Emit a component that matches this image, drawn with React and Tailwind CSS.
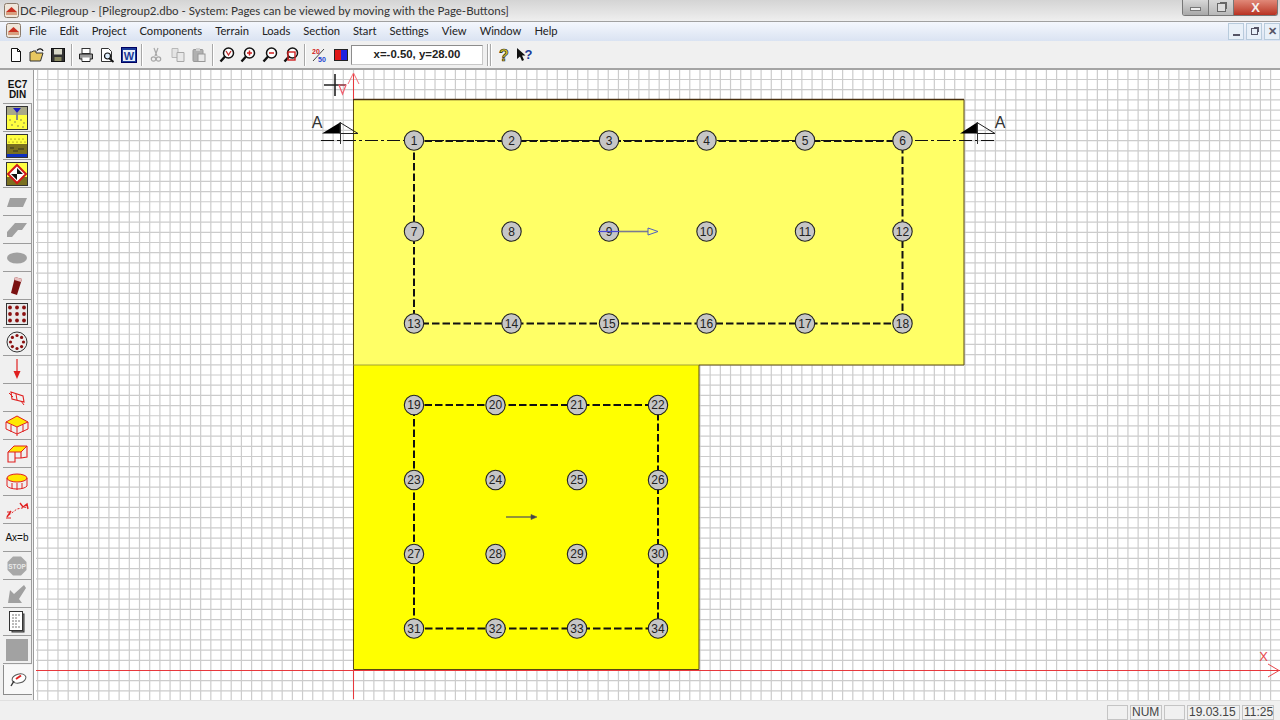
import React from "react";

const LIB = "font-['Liberation_Sans',Arial,sans-serif]";
const UI = "font-['Lato','Noto_Sans',sans-serif]";

const pilesTop = [];
[140.5, 231.5, 323.5].forEach((y) => {
  [414, 511.5, 609, 706.5, 805, 902.5].forEach((x) => pilesTop.push([x, y]));
});
const pilesBottom = [];
[405, 480, 554, 628.5].forEach((y) => {
  [414, 495.5, 577, 658].forEach((x) => pilesBottom.push([x, y]));
});
const piles = [...pilesTop, ...pilesBottom];

const STEP = 10.19;
const vLines = [];
for (let x = 353.5 - 31 * STEP; x < 1282; x += STEP) vLines.push(x);
const hLines = [];
for (let y = 670.5 + 2 * STEP; y > 68; y -= STEP) hLines.push(y);

function Canvas() {
  return (
    <svg viewBox="36 70 1244 630" className="block w-full h-full bg-white">
      {vLines.map((x, i) => (
        <line key={"v" + i} x1={x} x2={x} y1="70" y2="700" stroke="#cccccc" strokeWidth="1.2" />
      ))}
      {hLines.map((y, i) => (
        <line key={"h" + i} x1="36" x2="1280" y1={y} y2={y} stroke="#cccccc" strokeWidth="1.2" />
      ))}

      <rect x="353" y="99" width="611" height="266" fill="#ffff66" />
      <rect x="353" y="365" width="346" height="304.5" fill="#ffff00" />
      <path d="M353.5 99.5H964V365H699V669.5H353.5Z" fill="none" stroke="#5a4a10" strokeWidth="1" />
      <line x1="353" x2="964" y1="99.5" y2="99.5" stroke="#4a3010" strokeWidth="1.6" />
      <line x1="353" x2="699" y1="365" y2="365" stroke="#8a8a30" strokeWidth="0.8" />

      <line x1="36" x2="1280" y1="670.5" y2="670.5" stroke="#e8383c" strokeWidth="1" />
      <line x1="353.5" x2="353.5" y1="73" y2="99" stroke="#e8383c" strokeWidth="1" />
      <line x1="353.5" x2="353.5" y1="671" y2="699" stroke="#e8383c" strokeWidth="1" />
      <path d="M348 84L353.5 73L359 84" fill="none" stroke="#f07078" strokeWidth="1" />
      <path d="M1268 664L1279 670.5L1268 677" fill="none" stroke="#e8484c" strokeWidth="1" />
      <text x="1263.5" y="661" textAnchor="middle" fontSize="13" fill="#e8484c" className={LIB}>X</text>

      <path d="M324 85H346M335 74V96" stroke="#222" strokeWidth="1.6" />
      <path d="M339 85L346 85L342.5 94Z" fill="none" stroke="#f06070" strokeWidth="1.2" />

      {/* section line */}
      <line x1="321" x2="995" y1="140.5" y2="140.5" stroke="#111" strokeWidth="1.2" strokeDasharray="13 3 3 3" />
      <path d="M322 133.5L340 122.5V133.5Z" fill="#000" />
      <path d="M340 122.5L358 133.5H340Z" fill="none" stroke="#222" strokeWidth="1" />
      <line x1="340.5" x2="340.5" y1="122" y2="144" stroke="#333" strokeWidth="1" />
      <text x="317" y="128" textAnchor="middle" fontSize="16" fill="#333" className={LIB}>A</text>
      <path d="M960 133.5L977 122.5V133.5Z" fill="#000" />
      <path d="M977 122.5L995 133.5H977Z" fill="none" stroke="#222" strokeWidth="1" />
      <line x1="977.5" x2="977.5" y1="122" y2="144" stroke="#333" strokeWidth="1" />
      <text x="1000" y="128" textAnchor="middle" fontSize="16" fill="#333" className={LIB}>A</text>

      {/* dashed pile caps */}
      <rect x="414" y="141" width="488.5" height="182.5" fill="none" stroke="#111" strokeWidth="2" strokeDasharray="7.5 3" />
      <rect x="414" y="405" width="244" height="223.5" fill="none" stroke="#111" strokeWidth="2" strokeDasharray="7.5 3" />

      {piles.map(([x, y], i) => (
        <g key={i}>
          <circle cx={x} cy={y} r="9.7" fill="#c6c6c6" stroke="#222" strokeWidth="1.1" />
          <text x={x} y={y + 4.3} textAnchor="middle" fontSize="12" fill="#222" className={LIB}>{i + 1}</text>
        </g>
      ))}

      <line x1="619" x2="650" y1="231.5" y2="231.5" stroke="#7a7a90" strokeWidth="1.6" />
      <line x1="598" x2="619" y1="231.5" y2="231.5" stroke="#4848d8" strokeWidth="1.2" />
      <path d="M648 228L658 231.5L648 235Z" fill="#ffff66" stroke="#5060c0" strokeWidth="1" />
      <line x1="506" x2="532" y1="517" y2="517" stroke="#666650" strokeWidth="1.4" />
      <path d="M531 514.5L537 517L531 519.5Z" fill="#444" stroke="#555" strokeWidth="0.6" />
    </svg>
  );
}

const S = ({ children, w = 16, h = 16, vb = "0 0 16 16" }) => (
  <svg width={w} height={h} viewBox={vb} className="block">{children}</svg>
);

const Sep = ({ className = "mx-[2px]" }) => (
  <div className={`w-[2px] h-[22px] shrink-0 border-l border-[#a8a8a8] border-r border-r-white ${className}`} />
);

function Mag({ c = "#c00", sym }) {
  return (
    <S>
      <circle cx="9.5" cy="6" r="5" fill="#fff" stroke="#111" strokeWidth="1.5" />
      <path d="M6 9.5L1.5 14.5" stroke="#111" strokeWidth="2.4" />
      {sym === "fit" && <path d="M7 4L9.5 8L12 4" fill="none" stroke={c} strokeWidth="1.3" />}
      {sym === "plus" && <path d="M7 6H12M9.5 3.5V8.5" stroke={c} strokeWidth="1.5" />}
      {sym === "minus" && <path d="M7 6H12" stroke={c} strokeWidth="1.5" />}
      {sym === "win" && <rect x="5" y="5" width="7" height="8" fill="none" stroke={c} strokeWidth="1.4" />}
    </S>
  );
}

const Btn = ({ children, w = "w-[21px]" }) => (
  <div className={`${w} h-[22px] flex items-center justify-center shrink-0`}>{children}</div>
);

function TopToolbar() {
  return (
    <div className="h-[27px] bg-[#f0f0f0] flex items-center pl-[5px] shrink-0">
      <Btn><S><path d="M3.5 1.5H9.5L12.5 4.5V14.5H3.5Z" fill="#fff" stroke="#111" /><path d="M9.5 1.5V4.5H12.5" fill="none" stroke="#111" /></S></Btn>
      <Btn><S><path d="M1 14V5H3L4 4H7V6H14L11.5 14Z" fill="#e8c860" stroke="#333" strokeWidth="1" /><path d="M8 3.5C10 1 13 1.5 14 4" fill="none" stroke="#111" strokeWidth="1.3" /></S></Btn>
      <Btn w="w-[22px]"><S><rect x="1.5" y="1.5" width="13" height="13" fill="#333" stroke="#111" /><rect x="4" y="2" width="8" height="5.5" fill="#d8d8c8" /><rect x="4.5" y="10" width="7" height="4" fill="#888860" /></S></Btn>
      <Sep />
      <Btn><S><rect x="4" y="1.5" width="8" height="5" fill="#fff" stroke="#333" /><path d="M1.5 7H14.5V12H12V14.5H4V12H1.5Z" fill="#999" stroke="#222" /><rect x="4.5" y="10.5" width="7" height="3.5" fill="#fff" /></S></Btn>
      <Btn w="w-[22px]"><S><path d="M2.5 1.5H9.5L12.5 4.5V14.5H2.5Z" fill="#fff" stroke="#333" /><circle cx="8.5" cy="9" r="3" fill="#e0f0ff" stroke="#111" strokeWidth="1.2" /><path d="M10.5 11.5L14.5 15" stroke="#111" strokeWidth="1.8" /></S></Btn>
      <Btn><S><rect x="0.5" y="0.5" width="15" height="15" fill="#1a3a9a" stroke="#000060" /><rect x="2" y="3" width="12" height="11" fill="#e8eef8" /><text x="8" y="13" textAnchor="middle" fontSize="11" fontWeight="bold" fill="#1a3a9a" className={LIB}>W</text></S></Btn>
      <Sep />
      <Btn w="w-[22px]"><S><path d="M6 1L9 9M10 1L7 9" stroke="#a8a8a8" strokeWidth="1.2" /><circle cx="5.5" cy="12" r="2.2" fill="none" stroke="#a8a8a8" strokeWidth="1.2" /><circle cx="10.5" cy="12" r="2.2" fill="none" stroke="#a8a8a8" strokeWidth="1.2" /></S></Btn>
      <Btn><S><path d="M2 1.5H8V10.5H2Z" fill="#e4e4e4" stroke="#b8b8b8" /><path d="M7 5.5H14V14.5H7Z" fill="#e8e8e8" stroke="#a8a8a8" /></S></Btn>
      <Btn w="w-[22px]"><S><rect x="2" y="2.5" width="10" height="12" rx="1" fill="#b0b0b0" stroke="#989898" /><rect x="5" y="1" width="4" height="3" fill="#d0d0d0" /><rect x="7" y="7" width="7" height="7.5" fill="#e8e8e8" stroke="#989898" /></S></Btn>
      <Sep />
      <Btn><Mag c="#c03030" sym="fit" /></Btn>
      <Btn w="w-[22px]"><Mag c="#d02020" sym="plus" /></Btn>
      <Btn><Mag c="#d02020" sym="minus" /></Btn>
      <Btn><Mag c="#d02020" sym="win" /></Btn>
      <Sep className="ml-[3px] mr-[2px]" />
      <Btn w="w-[22px]">
        <S>
          <text x="1" y="6.5" fontSize="7" fontWeight="bold" fill="#d02020" className={LIB}>20</text>
          <path d="M2 14L13 2" stroke="#444" strokeWidth="1" />
          <text x="7" y="15" fontSize="7" fontWeight="bold" fill="#2040d0" className={LIB}>50</text>
        </S>
      </Btn>
      <Btn>
        <S><rect x="1.5" y="2.5" width="13" height="11" fill="#2020e0" stroke="#222" /><rect x="2" y="3" width="6" height="10" fill="#e01818" /></S>
      </Btn>
      <div className={`w-[132px] h-[20px] shrink-0 border border-[#8c8c8c] border-r-[#c8c8c8] border-b-[#c8c8c8] bg-white flex items-center justify-center text-[11.4px] font-bold text-[#222] ${LIB}`}>
        x=-0.50, y=28.00
      </div>
      <Sep className="ml-[4px] mr-[1px]" />
      <Sep className="mr-[1px]" />
      <Btn>
        <S><text x="8" y="13.5" textAnchor="middle" fontSize="16" fontWeight="bold" fill="#e0d020" stroke="#222" strokeWidth="0.7" className={LIB}>?</text></S>
      </Btn>
      <Btn>
        <S w={18} vb="0 0 18 16"><path d="M1 1V12L4 9.5L6 14L8 13L6 8.5H9.5Z" fill="#111" /><text x="12.5" y="12" textAnchor="middle" fontSize="13" fontWeight="bold" fill="#1a3a9a" className={LIB}>?</text></S>
      </Btn>
    </div>
  );
}

const soilDots = (
  <path d="M3 8h.01M7 8h.01M11 8h.01M15 8h.01M19 8h.01M5 5h.01M9 5h.01M13 5h.01M17 5h.01" stroke="#665500" strokeWidth="1.2" strokeLinecap="round" />
);

const LeftIcons = [
  <S w={22} h={24} vb="0 0 22 24">
    <rect x="0.5" y="0.5" width="21" height="23" fill="#ffff40" stroke="#333" />
    <rect x="1" y="1" width="20" height="8" fill="#a8a888" />
    <path d="M7 2H15L11 7Z" fill="#2020c0" />
    <path d="M11 7V14" stroke="#888" strokeWidth="2" />
    <path d="M4 14h.01M9 16h.01M15 14h.01M18 17h.01M6 19h.01M12 20h.01M17 21h.01" stroke="#555" strokeWidth="1.3" strokeLinecap="round" />
  </S>,
  <S w={22} h={24} vb="0 0 22 24">
    <rect x="0.5" y="0.5" width="21" height="23" fill="#ffff40" stroke="#333" />
    <rect x="1" y="10" width="20" height="10" fill="#7a7020" />
    <rect x="1" y="20" width="20" height="3" fill="#1030c0" />
    {soilDots}
    <path d="M4 14H8M12 15H18M7 17H12" stroke="#222" strokeWidth="0.8" />
  </S>,
  <S w={22} h={24} vb="0 0 22 24">
    <rect x="0.5" y="0.5" width="21" height="23" fill="#ffff40" stroke="#333" />
    <rect x="1" y="15" width="20" height="8" fill="#7a7020" />
    <path d="M11 3L20 12L11 21L2 12Z" fill="#fff" stroke="#d01818" strokeWidth="2" />
    <path d="M11 6L17 12H11V18L5 12H11Z" fill="#111" />
  </S>,
  <S w={22} h={14} vb="0 0 22 14"><path d="M4 3H21L17 12H1Z" fill="#a0a0a0" /></S>,
  <S w={22} h={18} vb="0 0 22 18"><path d="M9 2H21L16 9H12L6 16H1V11Z" fill="#a0a0a0" /></S>,
  <S w={22} h={14} vb="0 0 22 14"><ellipse cx="11" cy="7" rx="10" ry="5.5" fill="#a0a0a0" /></S>,
  <S w={14} h={20} vb="0 0 14 20">
    <path d="M5 1L12 3L7 19L1 17Z" fill="#7a1010" /><path d="M5 1L12 3L11 6L4.5 4Z" fill="#e8c0c0" />
  </S>,
  <S w={22} h={22} vb="0 0 22 22">
    <rect x="0.5" y="0.5" width="21" height="21" fill="#e8e8e8" stroke="#333" />
    {[4, 11, 18].map((x) => [4.5, 11, 17.5].map((y) => <circle key={x + "-" + y} cx={x} cy={y} r="1.9" fill="#8a1010" />))}
  </S>,
  <S w={22} h={22} vb="0 0 22 22">
    <circle cx="11" cy="11" r="10" fill="#eee" stroke="#333" />
    {[0, 1, 2, 3, 4, 5, 6, 7].map((i) => (
      <circle key={i} cx={11 + 6.5 * Math.cos((i * Math.PI) / 4)} cy={11 + 6.5 * Math.sin((i * Math.PI) / 4)} r="1.6" fill="#8a1010" />
    ))}
  </S>,
  <S w={10} h={22} vb="0 0 10 22"><path d="M5 0V14" stroke="#e02020" strokeWidth="1.2" /><path d="M1.5 12H8.5L5 20Z" fill="#e02020" /></S>,
  <S w={20} h={18} vb="0 0 20 18">
    <path d="M4 3L16 7L17 13L5 10Z" fill="none" stroke="#e02020" strokeWidth="1.1" /><path d="M9 5L10 11M2 4L6 8M14 12L17 16" stroke="#e02020" strokeWidth="1" />
  </S>,
  <S w={24} h={22} vb="0 0 24 22">
    <path d="M12 1L23 7L12 12L1 7Z" fill="#ffe800" stroke="#e02020" />
    <path d="M1 7V14L12 19L23 14V7M12 12V21M6 10V17M18 10V17" fill="none" stroke="#e02020" />
  </S>,
  <S w={22} h={22} vb="0 0 22 22">
    <path d="M8 3H21L15 9H2Z" fill="#ffe800" stroke="#e02020" />
    <path d="M2 9V19H9V9M15 9V15M21 3V14L15 15H9" fill="none" stroke="#e02020" strokeWidth="1.1" />
  </S>,
  <S w={22} h={20} vb="0 0 22 20">
    <ellipse cx="11" cy="6" rx="10" ry="4" fill="#ffe800" stroke="#e02020" />
    <path d="M1 6V14C4 18 18 18 21 14V6M6 11V16M11 11V18M16 11V16" fill="none" stroke="#e02020" />
  </S>,
  <S w={24} h={20} vb="0 0 24 20">
    <path d="M4 15L12 9L22 7" fill="none" stroke="#e02020" strokeDasharray="2 1.5" />
    <path d="M2 17L6 11M15 3L18 7L22 4L23 9" fill="none" stroke="#e02020" strokeWidth="1.4" />
    <path d="M2 12H5M1 18H6" stroke="#e02020" />
  </S>,
  <span className={`text-[10px] text-[#111] leading-none ${LIB}`}>Ax=b</span>,
  <S w={20} h={20} vb="0 0 20 20">
    <path d="M6 0.5H14L19.5 6V14L14 19.5H6L0.5 14V6Z" fill="#a8a8a8" />
    <text x="10" y="13" textAnchor="middle" fontSize="6.5" fontWeight="bold" fill="#e8e8e8" className={LIB}>STOP</text>
  </S>,
  <S w={20} h={20} vb="0 0 20 20"><path d="M17 1L19 4L12 15L15 19H1L3 6L7 10Z" fill="#a0a0a0" /></S>,
  <S w={16} h={22} vb="0 0 16 22">
    <rect x="3" y="3" width="12" height="18" fill="#888" stroke="#333" />
    <rect x="0.5" y="0.5" width="13" height="19" fill="#fff" stroke="#333" />
    <path d="M3 4H11M3 7H9M3 10H11M3 13H8M3 16H11" stroke="#777" strokeDasharray="2 1" />
  </S>,
  <div className="w-[22px] h-[22px] bg-[#a2a2a2]" />,
  <S w={18} h={14} vb="0 0 18 14">
    <ellipse cx="10" cy="5.5" rx="7" ry="4.5" fill="#fff" stroke="#555" transform="rotate(-15 10 5.5)" />
    <path d="M7 6L12 2.5" stroke="#e02020" strokeWidth="2" />
    <path d="M5 8L2 13" stroke="#333" strokeWidth="1.4" />
  </S>,
];

function LeftToolbar() {
  return (
    <div className="w-[36px] shrink-0 bg-[#f0f0f0] border-r-[2px] border-r-white">
      <div className="w-[34px] h-full border-r border-r-[#9c9c9c] pl-[3px] pt-[7px] flex flex-col">
        <div className={`w-[29px] h-[27px] flex flex-col items-center justify-center border-b border-[#9c9c9c] text-[10px] leading-[10px] font-bold text-[#111] ${LIB}`}>
          <span>EC7</span>
          <span>DIN</span>
        </div>
        {LeftIcons.map((icon, i) => {
          const active = i === LeftIcons.length - 1;
          return (
            <div
              key={i}
              className={
                active
                  ? "w-[29px] h-[30px] mt-[1px] flex items-center justify-center bg-[#f8f8f8] border-l border-b border-[#8c8c8c]"
                  : "w-[29px] h-[28px] flex items-center justify-center border-b border-r border-[#9c9c9c]"
              }
            >
              {icon}
            </div>
          );
        })}
      </div>
    </div>
  );
}

function StatusCell({ w, children }) {
  return (
    <div className={`${w} h-[15px] mr-[2px] shrink-0 border border-[#c4c4c4] flex items-center pl-[1px] text-[12px] text-[#444] leading-none ${LIB}`}>
      {children}
    </div>
  );
}

const AppIcon = () => (
  <S w={15} h={15} vb="0 0 15 15">
    <rect x="0.5" y="0.5" width="14" height="14" rx="2" fill="#efe6da" stroke="#8a7a6a" />
    <path d="M2 9L7.5 4L13 9Z" fill="#c83020" />
    <rect x="2" y="9" width="11" height="3" fill="#d8a080" />
  </S>
);

export default function App() {
  const menus = ["File", "Edit", "Project", "Components", "Terrain", "Loads", "Section", "Start", "Settings", "View", "Window", "Help"];
  return (
    <div className="w-[1280px] h-[720px] overflow-hidden flex flex-col bg-[#f0f0f0]">
      {/* title */}
      <div className="h-[21px] shrink-0 flex items-center bg-gradient-to-b from-[#d4d4d4] to-[#efefef] relative">
        <div className="ml-[4px] shrink-0"><AppIcon /></div>
        <span className={`ml-[1px] text-[11.5px] text-[#333] whitespace-nowrap ${UI}`}>DC-Pilegroup - [Pilegroup2.dbo - System: Pages can be viewed by moving with the Page-Buttons]</span>
        <div className="absolute right-[2px] top-0 h-[16px] flex border border-t-0 border-[#777] rounded-b-[3px] overflow-hidden">
          <div className="w-[26px] bg-gradient-to-b from-[#d8d8d8] to-[#a8a8a8] flex items-center justify-center border-r border-[#777]">
            <div className="w-[11px] h-[4px] bg-[#eee] border border-[#777] mt-[3px]" />
          </div>
          <div className="w-[25px] bg-gradient-to-b from-[#d8d8d8] to-[#b8b8b8] flex items-center justify-center border-r border-[#777]">
            <div className="w-[9px] h-[9px] border border-[#666] bg-[#ddd] shadow-[2px_-2px_0_-1px_#666]" />
          </div>
          <div className="w-[43px] bg-gradient-to-b from-[#e08878] to-[#b83020] flex items-center justify-center">
            <span className={`text-[13px] font-bold text-[#f4f0ee] leading-none ${LIB}`}>X</span>
          </div>
        </div>
      </div>
      {/* menu */}
      <div className="h-[20px] pb-[2px] shrink-0 border-t border-[#a0a0a0] bg-gradient-to-b from-[#f4f7fd] to-[#dae3f2] flex items-center relative">
        <div className="ml-[6px] shrink-0"><AppIcon /></div>
        <div className={`flex ml-[8px] gap-[13px] text-[11.2px] leading-[16px] text-[#222] ${UI}`}>
          {menus.map((m) => <span key={m}>{m}</span>)}
        </div>
        <div className="absolute right-0 top-[1px] h-[17px] flex gap-[2px]">
          {[
            <div className="w-[7px] h-[2px] bg-[#556] mt-[6px]" />,
            <div className="w-[7px] h-[7px] border border-[#556] shadow-[2px_-2px_0_-1px_#556]" />,
            <span className={`text-[11px] font-bold text-[#556] ${LIB}`}>✕</span>,
          ].map((c, i) => (
            <div key={i} className="w-[16px] h-[17px] border border-[#b8cbdc] bg-[#e8f0f8] flex items-center justify-center">{c}</div>
          ))}
        </div>
      </div>
      <TopToolbar />
      <div className="h-[2px] shrink-0 bg-[#a4a4a4]" />
      {/* middle */}
      <div className="flex-1 min-h-0 flex">
        <LeftToolbar />
        <div className="flex-1 min-w-0">
          <Canvas />
        </div>
      </div>
      {/* status */}
      <div className="h-[20px] shrink-0 bg-[#f0f0f0] border-t border-[#e0e0e0] flex items-center justify-end pr-[4px] pt-[3px]">
        <StatusCell w="w-[21px]"></StatusCell>
        <StatusCell w="w-[32px]">NUM</StatusCell>
        <StatusCell w="w-[21px]"></StatusCell>
        <StatusCell w="w-[53px]">19.03.15</StatusCell>
        <StatusCell w="w-[32px]">11:25</StatusCell>
      </div>
    </div>
  );
}
